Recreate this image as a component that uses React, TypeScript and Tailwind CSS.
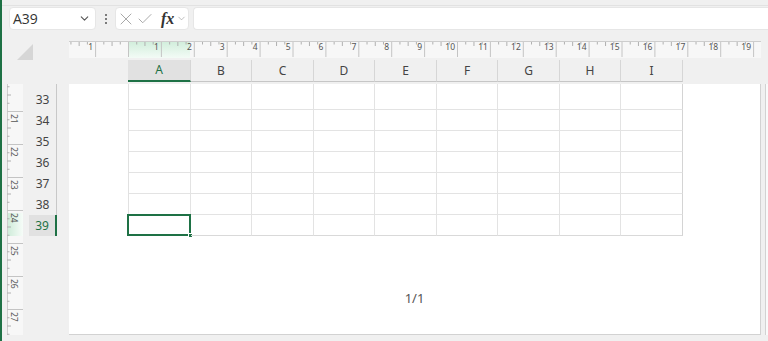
import React from "react";
import { X, Check, ChevronDown } from "lucide-react";

const COLS = ["A", "B", "C", "D", "E", "F", "G", "H", "I"];
const WIDTHS = [62, 61, 62, 61, 62, 61, 62, 61, 62];
const ROWS = [33, 34, 35, 36, 37, 38, 39];
const CM = 32.9;
const FONT = "font-['Noto_Sans','Open_Sans',sans-serif]";

// horizontal ruler above the page, origin sits on the left edge of column A
function HRuler() {
    const origin = 59;
    const majors: number[] = [];
    for (let k = -2; k <= 19; k++) majors.push(k);
    return (
        <svg width={692} height={18} className="block">
            <defs>
                <linearGradient id="hg" x1="0" y1="0" x2="0" y2="1">
                    <stop offset="0" stopColor="#d2eedc" />
                    <stop offset="1" stopColor="#f3fbf6" />
                </linearGradient>
            </defs>
            <rect x={0} y={1} width={692} height={17} fill="#f7f7f7" />
            <rect x={59} y={2} width={62} height={16} fill="url(#hg)" />
            <line x1={0} y1={1.5} x2={692} y2={1.5} stroke="#cdcdcd" />
            {majors.map((k) => {
                const x = origin + k * CM;
                const label = k >= 1 ? String(k) : k === -1 ? "1" : "";
                return (
                    <g key={k}>
                        <line x1={x + 0.5} y1={2} x2={x + 0.5} y2={17} stroke="#c4c4c4" />
                        {[0.25, 0.5, 0.75].map((f) => (
                            <line
                                key={f}
                                x1={x + f * CM + 0.5}
                                y1={2}
                                x2={x + f * CM + 0.5}
                                y2={f === 0.5 ? 6 : 4.5}
                                stroke="#b0b0b0"
                            />
                        ))}
                        {label && (
                            <text x={x - 2} y={10} fontSize={8.5} fill="#555" textAnchor="end" fontFamily="Noto Sans, sans-serif">
                                {label}
                            </text>
                        )}
                    </g>
                );
            })}
        </svg>
    );
}

// vertical ruler beside the row headers
function VRuler() {
    const majors: number[] = [];
    for (let k = -1; k <= 6; k++) majors.push(k);
    return (
        <svg width={16} height={251} className="block">
            <defs>
                <linearGradient id="vg" x1="0" y1="0" x2="1" y2="0">
                    <stop offset="0" stopColor="#cdebd8" />
                    <stop offset="1" stopColor="#f6fcf8" />
                </linearGradient>
            </defs>
            <rect x={0} y={0} width={16} height={251} fill="#f7f7f7" />
            <rect x={0} y={129} width={16} height={23} fill="url(#vg)" />
            <line x1={0.5} y1={0} x2={0.5} y2={251} stroke="#cdcdcd" />
            {majors.map((k) => {
                const y = 27 + k * 33;
                return (
                    <g key={k}>
                        <line x1={0} y1={y + 0.5} x2={16} y2={y + 0.5} stroke="#c4c4c4" />
                        {[0.25, 0.5, 0.75].map((f) => (
                            <line key={f} x1={0} y1={y + f * 33 + 0.5} x2={f === 0.5 ? 4 : 2.5} y2={y + f * 33 + 0.5} stroke="#b0b0b0" />
                        ))}
                        {k >= 0 && (
                            <text
                                x={4}
                                y={y + 3}
                                fontSize={8.5}
                                fill="#555"
                                fontFamily="Noto Sans, sans-serif"
                                transform={`rotate(90 4 ${y + 3})`}
                            >
                                {21 + k}
                            </text>
                        )}
                    </g>
                );
            })}
        </svg>
    );
}

function FormulaBar() {
    return (
        <div className="h-[23px] mt-[1px] flex items-stretch pl-[7px] shrink-0">
            <div className="w-[87px] bg-white rounded-[4px] border border-[#e6e6e6] flex items-center justify-between pl-[3px] pr-[4px]">
                <span className="text-[14px] text-[#333] font-['Open_Sans',sans-serif] leading-none">A39</span>
                <ChevronDown size={13} strokeWidth={2} className="text-[#555]" />
            </div>
            <div className="w-[19px] flex flex-col items-center justify-center gap-[2px]">
                <span className="w-[2px] h-[2px] bg-[#555] rounded-full" />
                <span className="w-[2px] h-[2px] bg-[#555] rounded-full" />
                <span className="w-[2px] h-[2px] bg-[#555] rounded-full" />
            </div>
            <div className="w-[74px] bg-white rounded-[4px] border border-[#e6e6e6] flex items-center">
                <X size={20} strokeWidth={1.1} className="text-[#a0a0a0]" />
                <Check size={18} strokeWidth={1.2} className="text-[#a0a0a0]" />
                <span className="ml-[7px] font-['Liberation_Serif',serif] italic font-bold text-[16px] text-[#333] leading-none">fx</span>
                <ChevronDown size={11} strokeWidth={1.2} className="text-[#888] ml-[2px]" />
            </div>
            <div className="flex-1 ml-[4px] bg-white rounded-l-[4px] border border-r-0 border-[#e6e6e6]" />
        </div>
    );
}

export default function App() {
    return (
        <div className={`w-[768px] h-[341px] overflow-hidden bg-[#f0f0f0] border-l-2 border-[#1e7145] flex flex-col ${FONT}`}>
            <div className="h-[6px] border-b border-[#e2e2e2] shrink-0" />
            <FormulaBar />
            <div className="flex mt-[10px] h-[301px]">
                {/* left: corner, vertical ruler, row headers */}
                <div className="w-[67px] flex flex-col shrink-0">
                    <div className="h-[44px] pl-[15px] pt-[4px]">
                        <svg width={16} height={16} className="block">
                            <polygon points="16,0 16,16 0,16" fill="#d6d6d6" />
                        </svg>
                    </div>
                    <div className="flex">
                        <div className="ml-[5px]">
                            <VRuler />
                        </div>
                        <div className="ml-[6px] w-[28px] flex flex-col">
                            {ROWS.map((r, i) => {
                                const sel = r === 39;
                                return (
                                    <div
                                        key={r}
                                        className={`flex items-center justify-center text-[12px] leading-none ${
                                            i === 0 ? "h-[26px] pt-[5px]" : "h-[21px]"
                                        } ${
                                            sel
                                                ? "bg-[#e1e1e1] border-r-2 border-[#1e7145] text-[#1e7145]"
                                                : "border-r border-[#c8c8c8] text-[#444]"
                                        }`}
                                    >
                                        {r}
                                    </div>
                                );
                            })}
                        </div>
                    </div>
                </div>

                {/* right: ruler, column headers, page */}
                <div className="flex-1 flex flex-col">
                    <HRuler />
                    <div className="h-[22px] mt-[2px] flex pl-[59px]">
                        {COLS.map((c, i) => {
                            const sel = i === 0;
                            return (
                                <div
                                    key={c}
                                    style={{ width: WIDTHS[i] + (i === 0 ? 1 : 0) }}
                                    className={`flex items-center justify-center text-[12px] leading-none border-r border-[#d6d6d6] ${
                                        sel
                                            ? "bg-[#e1e1e1] border-b-2 border-b-[#1e7145] text-[#1e7145]"
                                            : "border-b border-b-[#c6c6c6] text-[#444]"
                                    }`}
                                >
                                    {c}
                                </div>
                            );
                        })}
                    </div>
                    <div className="flex mt-[2px]">
                        <div className="w-[692px] h-[251px] bg-white border-r border-b border-[#d2d2d2] flex flex-col">
                            <div className="ml-[59px] border-l border-[#e1e1e1] flex flex-col self-start">
                                {ROWS.map((r, ri) => (
                                    <div key={r} className={`flex ${ri === 0 ? "h-[26px]" : "h-[21px]"}`}>
                                        {COLS.map((c, ci) => (
                                            <div
                                                key={c}
                                                style={{ width: WIDTHS[ci] }}
                                                className={`relative border-r border-b ${
                                                    ci === 8 ? "border-r-[#d4d4d4]" : "border-r-[#e3e3e3]"
                                                } ${ri === 6 ? "border-b-[#d9d9d9]" : "border-b-[#e3e3e3]"}`}
                                            >
                                                {r === 39 && c === "A" && (
                                                    <div className="absolute -left-[2px] -top-[1px] -right-[1px] -bottom-[1px] border-2 border-[#1e7145]">
                                                        <div className="absolute -right-[4px] -bottom-[4px] w-[5px] h-[5px] bg-[#1e7145] border border-white" />
                                                    </div>
                                                )}
                                            </div>
                                        ))}
                                    </div>
                                ))}
                            </div>
                            <div className="mt-[54px] text-center text-[13px] leading-[16px] text-[#555]">1/1</div>
                        </div>
                        <div className="ml-[4px] w-[3px] h-[251px] bg-[#fafafa] border-l border-[#d2d2d2]" />
                    </div>
                </div>
            </div>
        </div>
    );
}
